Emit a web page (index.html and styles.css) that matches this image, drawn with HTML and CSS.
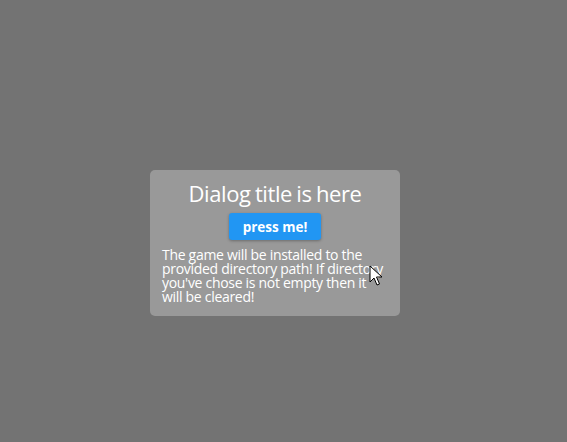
FILE: index.html
```html
<!DOCTYPE html>
<html>
<head>
<meta charset="utf-8">
<link rel="stylesheet" href="styles.css">
</head>
<body>
<div class="overlay">
  <div class="dialog">
    <div class="title">Dialog title is here</div>
    <button class="btn">press me!</button>
    <p class="body-text">The game will be installed to the provided directory path! If directory you've chose is not empty then it will be cleared!</p>
  </div>
</div>
<svg class="cursor" width="14" height="22" viewBox="0 0 14 22">
  <path d="M1 1 L1 17 L5 13 L8 20 L10.5 19 L7.5 12 L13 12 Z" fill="#fff" stroke="#000" stroke-width="1" stroke-linejoin="miter"/>
</svg>
</body>
</html>
```
FILE: styles.css
```css
html, body {
  margin: 0;
  padding: 0;
  width: 567px;
  height: 442px;
  background: #737373;
  overflow: hidden;
  font-family: "Open Sans", "Noto Sans", sans-serif;
}
.overlay {
  width: 567px;
  height: 442px;
  display: flex;
  justify-content: flex-start;
  align-items: flex-start;
  padding: 170px 0 0 150px;
  box-sizing: border-box;
}
.dialog {
  width: 250px;
  height: 146px;
  box-sizing: border-box;
  background: #999999;
  border-radius: 5px;
  padding: 8px 12px 0 12px;
  display: flex;
  flex-direction: column;
  align-items: center;
  color: #fff;
}
.title {
  font-size: 22px;
  line-height: 30px;
  letter-spacing: -0.4px;
  word-spacing: -1px;
}
.btn {
  margin-top: 5px;
  width: 92px;
  height: 27px;
  border: none;
  border-radius: 3px;
  background: #2196f3;
  color: #fff;
  font-family: inherit;
  font-weight: 700;
  font-size: 13.5px;
  box-shadow: 0 1px 3px rgba(0,0,0,0.3);
  padding: 0;
}
.body-text {
  align-self: stretch;
  margin: 8px 0 0 0;
  font-size: 14px;
  line-height: 14px;
  letter-spacing: -0.3px;
}
.cursor {
  position: absolute;
  left: 369px;
  top: 265px;
}
```
